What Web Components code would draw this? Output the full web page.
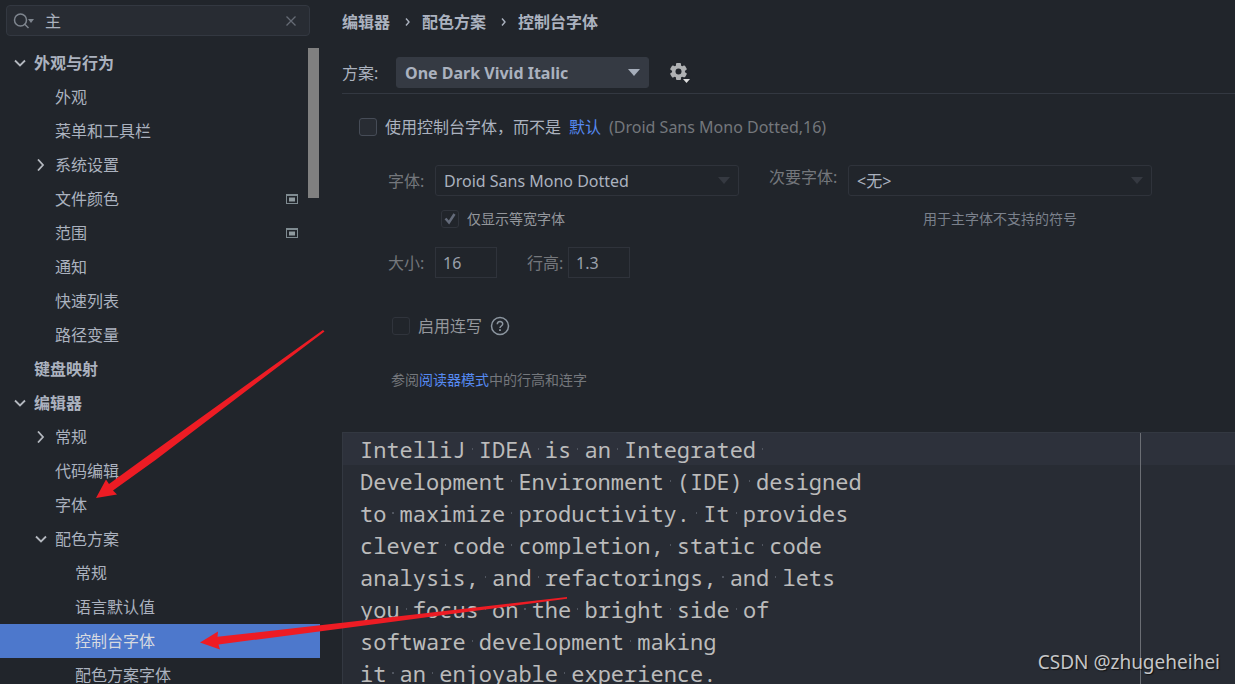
<!DOCTYPE html>
<html lang="zh-CN">
<head>
<meta charset="utf-8">
<title>设置</title>
<style>
    :root{
        --bg: #21252b;
        --bg-editor: #282c34;
        --bg-field: #282c33;
        --bg-button: #353a43;
        --caret-row: #2d313b;
        --line: #333841;
        --text: #abb2bf;
        --text-dim: #74777c;
        --link: #568af2;
        --selection: #4d78cc;
    }
    body{
        margin: 0;
        height: 100vh;
        display: flex;
        overflow: hidden;
        position: relative;
        background: var(--bg);
        color: var(--text);
        font: 16px/24px "Noto Sans", "Noto Sans CJK SC", sans-serif;
    }
</style>
</head>
<body>
    <side-bar>
        <search-box slot="search" value="主"></search-box>
        <tree-item depth="0" state="open" strong>外观与行为</tree-item>
        <tree-item depth="1">外观</tree-item>
        <tree-item depth="1">菜单和工具栏</tree-item>
        <tree-item depth="1" state="closed">系统设置</tree-item>
        <tree-item depth="1" project>文件颜色</tree-item>
        <tree-item depth="1" project>范围</tree-item>
        <tree-item depth="1">通知</tree-item>
        <tree-item depth="1">快速列表</tree-item>
        <tree-item depth="1">路径变量</tree-item>
        <tree-item depth="0" strong>键盘映射</tree-item>
        <tree-item depth="0" state="open" strong>编辑器</tree-item>
        <tree-item depth="1" state="closed">常规</tree-item>
        <tree-item depth="1">代码编辑</tree-item>
        <tree-item depth="1">字体</tree-item>
        <tree-item depth="1" state="open">配色方案</tree-item>
        <tree-item depth="2">常规</tree-item>
        <tree-item depth="2">语言默认值</tree-item>
        <tree-item depth="2" selected>控制台字体</tree-item>
        <tree-item depth="2">配色方案字体</tree-item>
    </side-bar>
    <settings-page>
        <bread-crumb slot="header" path="编辑器/配色方案/控制台字体"></bread-crumb>
        <combo-box slot="scheme" label="方案:" value="One Dark Vivid Italic" filled></combo-box>
        <gear-button slot="scheme"></gear-button>
        <font-form></font-form>
        <code-preview slot="preview">IntelliJ IDEA is an Integrated 
Development Environment (IDE) designed
to maximize productivity. It provides
clever code completion, static code
analysis, and refactorings, and lets
you focus on the bright side of
software development making
it an enjoyable experience.</code-preview>
    </settings-page>
    <note-arrows></note-arrows>
    <water-mark>CSDN @zhugeheihei</water-mark>

<script>
class SideBar extends HTMLElement {
    constructor(){
        super();
        this.attachShadow({mode: 'open'}).innerHTML = `
        <style>
        :host{
            display: flex;
            flex-direction: column;
            flex: 0 0 320px;
            position: relative;
            overflow: hidden;
        }
        nav{
            display: flex;
            flex-direction: column;
            padding-top: 10px;
        }
        #thumb{
            position: absolute;
            top: 48px;
            right: 1px;
            width: 11px;
            height: 150px;
            background: #808080;
        }
        </style>
        <slot name="search"></slot>
        <nav><slot></slot></nav>
        <div id="thumb"></div>
        `;
    }
}

class SearchBox extends HTMLElement {
    constructor(){
        super();
        this.attachShadow({mode: 'open'}).innerHTML = `
        <style>
        :host{
            display: flex;
            flex: none;
            align-items: center;
            box-sizing: border-box;
            height: 31px;
            margin: 5px 10px 0 6px;
            border: 1px solid var(--line);
            border-radius: 4px;
            background: var(--bg-field);
        }
        button{
            display: flex;
            border: 0;
            padding: 0;
            background: none;
        }
        #find{ margin-left: 6px; }
        #clear{ margin-right: 12px; }
        input{
            flex: 1;
            min-width: 0;
            border: 0;
            padding: 0 0 0 10px;
            background: none;
            color: inherit;
            font: inherit;
            outline: 0;
        }
        </style>
        <button id="find" aria-label="搜索历史">
            <svg width="22" height="18" fill="none" stroke="#7f868f" stroke-width="1.5">
                <circle cx="7.5" cy="8" r="6"/><path d="M11.5 12l4 4"/>
                <path d="M15 7h6l-3 4z" fill="#7f868f" stroke="none"/>
            </svg>
        </button>
        <input type="text" aria-label="搜索">
        <button id="clear" aria-label="清除">
            <svg width="12" height="12" stroke="#656b75" stroke-width="1.3"><path d="M1.5 1.5l9 9M10.5 1.5l-9 9"/></svg>
        </button>
        `;
    }
    connectedCallback(){
        const input = this.shadowRoot.querySelector('input');
        input.value = this.getAttribute('value') || '';
        this.shadowRoot.getElementById('clear').addEventListener('click', () => input.value = '');
    }
}

const chevrons = {
    open: '<path d="M1 3.5l5 5 5-5"/>',
    closed: '<path d="M3 0.5l5 5.5-5 5.5"/>'
}
const indents = [14, 35, 55]

class TreeItem extends HTMLElement {
    connectedCallback(){
        this.attachShadow({mode: 'open'}).innerHTML = `
        <style>
        :host{
            display: flex;
            align-items: center;
            height: 34px;
            padding: 0 22px 0 ${indents[this.getAttribute('depth')]}px;
        }
        :host([strong]){ font-weight: 700; }
        :host([selected]){
            background: var(--selection);
            color: #d7dae0;
        }
        svg{ flex: none; }
        #arrow{ margin-right: 8px; }
        span{ flex: 1; }
        </style>
        <svg id="arrow" width="12" height="12" fill="none" stroke="#b4b8bf" stroke-width="1.8">
            ${chevrons[this.getAttribute('state')] || ''}
        </svg>
        <span><slot></slot></span>
        ${this.hasAttribute('project') ? `
        <svg width="12" height="10">
            <path d="M0 0h12v10H0z" fill="#7f8b91"/>
            <path d="M1 2h10v7H1z" fill="#21252b"/>
            <path d="M3 3.500h6v4H3z" fill="#8f9a9f"/>
        </svg>` : ''}
        `;
    }
}

class SettingsPage extends HTMLElement {
    constructor(){
        super();
        this.attachShadow({mode: 'open'}).innerHTML = `
        <style>
        :host{
            display: flex;
            flex-direction: column;
            flex: 1;
            min-width: 0;
            padding-left: 22px;
        }
        #scheme{
            display: flex;
            align-items: center;
            gap: 20px;
            padding: 13px 0 5px;
            border-bottom: 1px solid var(--line);
        }
        </style>
        <slot name="header"></slot>
        <div id="scheme"><slot name="scheme"></slot></div>
        <slot></slot>
        <slot name="preview"></slot>
        `;
    }
}

class BreadCrumb extends HTMLElement {
    connectedCallback(){
        const parts = this.getAttribute('path').split('/');
        this.attachShadow({mode: 'open'}).innerHTML = `
        <style>
        :host{
            display: flex;
            align-items: center;
            height: 44px;
            font-weight: 700;
        }
        svg{ margin: 0 12px 0 15px; }
        </style>
        ${parts.map(p => `<span>${p}</span>`).join(`
        <svg width="5" height="8" fill="none" stroke="#abb2bf" stroke-width="1.4"><path d="M1 0.5l3 3.5-3 3.5"/></svg>`)}
        `;
    }
}

class ComboBox extends HTMLElement {
    connectedCallback(){
        this.attachShadow({mode: 'open'}).innerHTML = `
        <style>
        :host{
            display: flex;
            align-items: center;
            --arrow: #353941;
        }
        :host([top]){ align-items: flex-start; }
        :host([filled]){ --arrow: #a5adba; }
        label{
            flex: 0 0 var(--label-width, 54px);
            color: var(--label-color, inherit);
        }
        #box{
            display: flex;
            align-items: center;
            flex: 1;
            position: relative;
        }
        select{
            appearance: none;
            box-sizing: border-box;
            flex: 1;
            width: 100%;
            height: 31px;
            border: 1px solid #2f333b;
            border-radius: 3px;
            padding: 0 30px 0 8px;
            background: var(--bg);
            color: inherit;
            opacity: 1;
            font: inherit;
        }
        :host([filled]) select{
            width: 253px;
            background: var(--bg-button);
            border-color: var(--bg-button);
            font-weight: 700;
        }
        svg{
            position: absolute;
            right: 9px;
            pointer-events: none;
        }
        </style>
        <label for="select"></label>
        <div id="box">
            <select id="select"><option></option></select>
            <svg width="12" height="7"><path d="M0 0h12l-6 7z" fill="var(--arrow)"/></svg>
        </div>
        `;
        this.shadowRoot.querySelector('label').textContent = this.getAttribute('label');
        this.shadowRoot.querySelector('option').textContent = this.getAttribute('value');
        this.shadowRoot.querySelector('select').disabled = this.hasAttribute('disabled');
    }
}

class GearButton extends HTMLElement {
    constructor(){
        super();
        const teeth = [0, 60, 120].map(a => `<rect x="7" y="1" width="5" height="17" rx="1" transform="rotate(${a} 9.5 9.5)"/>`).join('');
        this.attachShadow({mode: 'open'}).innerHTML = `
        <style>
        :host{ display: flex; }
        button{
            display: flex;
            border: 0;
            padding: 0;
            background: none;
        }
        </style>
        <button aria-label="方案操作">
            <svg width="22" height="22" fill="#afb1b3">
                ${teeth}
                <circle cx="9.5" cy="9.5" r="6.5"/>
                <circle cx="9.5" cy="9.5" r="3" fill="#21252b"/>
                <path d="M12.5 15.5h10l-5 6z" fill="#21252b"/>
                <path d="M14 17h7l-3.5 4z" fill="#dcdcdc"/>
            </svg>
        </button>
        `;
    }
}

class CheckBox extends HTMLElement {
    connectedCallback(){
        this.attachShadow({mode: 'open'}).innerHTML = `
        <style>
        :host{
            display: flex;
            align-items: center;
            gap: 8px;
        }
        #box{ display: flex; position: relative; }
        input{
            appearance: none;
            box-sizing: border-box;
            width: 18px;
            height: 18px;
            margin: 0;
            border: 1px solid #464c57;
            border-radius: 3px;
            background: var(--bg-field);
        }
        input:disabled{
            border-color: #30343c;
            background: var(--bg);
        }
        svg{ display: none; position: absolute; inset: 0; pointer-events: none; }
        input:checked + svg{ display: block; }
        </style>
        <div id="box">
            <input type="checkbox" id="check">
            <svg width="18" height="18" fill="none" stroke="#646b7a" stroke-width="2.5"><path d="M4.5 8.5l3.5 4 5.5-8.5"/></svg>
        </div>
        <label for="check"><slot></slot></label>
        <slot name="after"></slot>
        `;
        const input = this.shadowRoot.querySelector('input');
        input.checked = this.hasAttribute('checked');
        input.disabled = this.hasAttribute('disabled');
    }
}

class NumberField extends HTMLElement {
    connectedCallback(){
        this.attachShadow({mode: 'open'}).innerHTML = `
        <style>
        :host{
            display: flex;
            align-items: center;
        }
        label{
            flex: 0 0 var(--label-width);
            color: var(--label-color);
        }
        input{
            box-sizing: border-box;
            width: 62px;
            height: 31px;
            border: 1px solid #2f333b;
            padding: 0 7px;
            background: var(--bg);
            color: #9ba1ac;
            font: inherit;
        }
        </style>
        <label for="field"></label>
        <input type="text" id="field">
        `;
        const input = this.shadowRoot.querySelector('input');
        this.shadowRoot.querySelector('label').textContent = this.getAttribute('label');
        input.value = this.getAttribute('value');
        input.disabled = this.hasAttribute('disabled');
    }
}

class FontForm extends HTMLElement {
    constructor(){
        super();
        this.attachShadow({mode: 'open'}).innerHTML = `
        <style>
        :host{
            display: block;
            padding: 21px 83px 40px 17px;
            --label-width: 47px;
            --label-color: var(--text-dim);
        }
        a{ color: var(--link); text-decoration: none; }
        #use{ display: flex; gap: 8px; color: var(--text-dim); }
        #use check-box{ color: var(--text); }
        #fonts{
            display: flex;
            align-items: flex-start;
            gap: 30px;
            margin: 26px 0 16px 29px;
        }
        #primary, #secondary{
            display: flex;
            flex-direction: column;
            gap: 11px;
        }
        #primary{ flex: 1 1 47px; }
        #secondary{ flex: 1 1 79px; --label-width: 79px; }
        #primary check-box{
            margin-left: 53px;
            color: #94979c;
            font-size: 14px;
        }
        #hint{
            margin-left: 79px;
            text-align: center;
            color: #7b818c;
            font-size: 14px;
        }
        #sizes{
            display: flex;
            gap: 30px;
            margin-left: 29px;
        }
        #sizes number-field + number-field{ --label-width: 41px; }
        #ligatures{
            margin: 36px 0 30px 33px;
            color: #94979c;
        }
        #note{
            margin: 0 0 0 32px;
            color: var(--text-dim);
            font-size: 14px;
        }
        button{
            display: flex;
            border: 0;
            padding: 0;
            background: none;
            color: #8c96a0;
        }
        </style>
        <div id="use">
            <check-box>使用控制台字体，而不是</check-box>
            <a href="#default">默认</a>
            <span>(Droid Sans Mono Dotted,16)</span>
        </div>
        <div id="fonts">
            <div id="primary">
                <combo-box label="字体:" value="Droid Sans Mono Dotted" disabled></combo-box>
                <check-box checked disabled>仅显示等宽字体</check-box>
            </div>
            <div id="secondary">
                <combo-box label="次要字体:" value="&lt;无&gt;" top disabled></combo-box>
                <div id="hint">用于主字体不支持的符号</div>
            </div>
        </div>
        <div id="sizes">
            <number-field label="大小:" value="16" disabled></number-field>
            <number-field label="行高:" value="1.3" disabled></number-field>
        </div>
        <check-box id="ligatures" disabled>启用连写
            <button slot="after" aria-label="帮助">
                <svg width="20" height="20" fill="none" stroke="currentColor" stroke-width="1.5">
                    <circle cx="10" cy="10" r="8.5"/>
                    <path d="M7.3 8.3c0-3.6 5.4-3.6 5.4-.3 0 2-2.7 2-2.7 4"/>
                    <path d="M10 13.3v1.7" stroke-width="1.8"/>
                </svg>
            </button>
        </check-box>
        <p id="note">参阅<a href="#reader">阅读器模式</a>中的行高和连字</p>
        `;
    }
}

class CodePreview extends HTMLElement {
    connectedCallback(){
        const root = this.attachShadow({mode: 'open'});
        root.innerHTML = `
        <style>
        :host{
            display: block;
            flex: 1;
            min-height: 0;
            overflow: hidden;
            position: relative;
            border: solid var(--line);
            border-width: 1px 0 0 1px;
            background: var(--bg-editor);
            color: #bbbbbb;
            font: 22px/32px "Droid Sans Mono", "Noto Sans Mono", "DejaVu Sans Mono", monospace;
        }
        .line{
            padding-left: 17px;
            white-space: pre;
        }
        .line:first-child{ background: var(--caret-row); }
        /* visible whitespace marks */
        .ws{ background: radial-gradient(circle at center, #50555f 1px, transparent 1px); }
        #margin{
            position: absolute;
            top: 0;
            bottom: 0;
            right: 94px;
            border-left: 1px solid #6b6e74;
        }
        </style>
        <div id="code"></div>
        <div id="margin"></div>
        `;
        const code = root.getElementById('code');
        for(const text of this.textContent.split('\n')){
            const line = document.createElement('div');
            line.className = 'line';
            line.innerHTML = text.replace(/ /g, '<span class="ws"> </span>');
            code.append(line);
        }
    }
}

class NoteArrows extends HTMLElement {
    constructor(){
        super();
        this.attachShadow({mode: 'open'}).innerHTML = `
        <style>
        :host{
            display: block;
            position: absolute;
            inset: 0;
            pointer-events: none;
        }
        </style>
        <svg width="100%" height="100%" fill="#ed1c24">
            <path d="M96 498L106 479.5 109 484 142 460 323 330 324.5 331.5 155.5 460 113 490.5 117 494.5z"/>
            <path d="M200 642.5L218 631.5 217.5 636.8 340 623 567 597 567 598.8 340 628.7 218.5 644.5 220 649.5z"/>
        </svg>
        `;
    }
}

class WaterMark extends HTMLElement {
    constructor(){
        super();
        this.attachShadow({mode: 'open'}).innerHTML = `
        <style>
        :host{
            display: block;
            position: absolute;
            right: 15px;
            bottom: 10px;
            color: #c6c7c9;
            font: 19px/24px "Noto Sans", sans-serif;
            text-shadow: 1px 1px 1px #111;
        }
        </style>
        <slot></slot>
        `;
    }
}

window.customElements.define('side-bar', SideBar)
window.customElements.define('search-box', SearchBox)
window.customElements.define('tree-item', TreeItem)
window.customElements.define('settings-page', SettingsPage)
window.customElements.define('bread-crumb', BreadCrumb)
window.customElements.define('combo-box', ComboBox)
window.customElements.define('gear-button', GearButton)
window.customElements.define('check-box', CheckBox)
window.customElements.define('number-field', NumberField)
window.customElements.define('font-form', FontForm)
window.customElements.define('code-preview', CodePreview)
window.customElements.define('note-arrows', NoteArrows)
window.customElements.define('water-mark', WaterMark)
</script>
</body>
</html>
